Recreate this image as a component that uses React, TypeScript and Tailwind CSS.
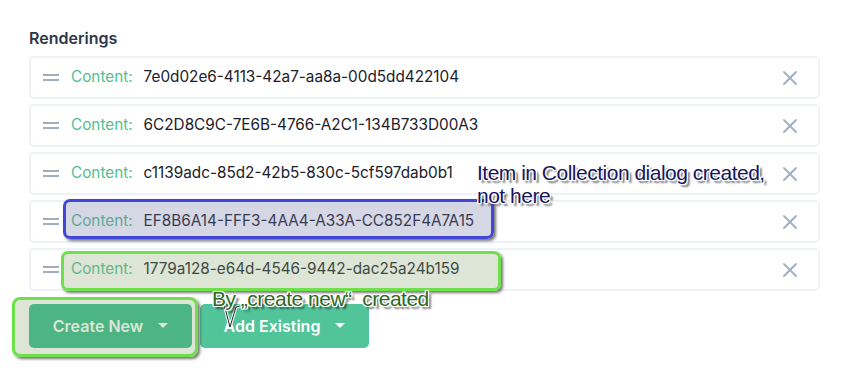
import React from "react";

const rows = [
  "7e0d02e6-4113-42a7-aa8a-00d5dd422104",
  "6C2D8C9C-7E6B-4766-A2C1-134B733D00A3",
  "c1139adc-85d2-42b5-830c-5cf597dab0b1",
  "EF8B6A14-FFF3-4AA4-A33A-CC852F4A7A15",
  "1779a128-e64d-4546-9442-dac25a24b159",
];

const annoShadow =
  "1px 0 0 #fff, -1px 0 0 #fff, 0 1px 0 #fff, 0 -1px 0 #fff, 1px 1px 0 #fff, -1px -1px 0 #fff, 1px -1px 0 #fff, -1px 1px 0 #fff, 3px 3px 2px rgba(0,0,0,0.6)";

function Handle() {
  return (
    <svg width="16" height="8" viewBox="0 0 16 8" className="shrink-0">
      <rect x="0" y="0" width="16" height="2" fill="#a0aec0" />
      <rect x="0" y="5" width="16" height="2" fill="#a0aec0" />
    </svg>
  );
}

function XIcon() {
  return (
    <svg width="16" height="16" viewBox="0 0 16 16" className="shrink-0">
      <path d="M2 2 L14 14 M14 2 L2 14" stroke="#a0aec0" strokeWidth="1.8" strokeLinecap="round" />
    </svg>
  );
}

function Caret() {
  return (
    <svg width="10" height="6" viewBox="0 0 10 6" className="shrink-0">
      <path d="M0 0 L10 0 L5 5 Z" fill="currentColor" />
    </svg>
  );
}

export default function App() {
  return (
    <div
      className="w-[843px] h-[371px] bg-white relative overflow-hidden"
      style={{ fontFamily: "Inter, 'Noto Sans', sans-serif" }}
    >
      <div className="pl-[29px] pr-[23px] pt-[28px]">
        <div className="text-[16px] font-semibold text-[#2d3748] leading-[20px] mb-[8px]">Renderings</div>
        <div className="flex flex-col gap-[5px]">
          {rows.map((r, i) => (
            <div
              key={i}
              className="h-[43px] border-2 border-[#edf2f7] rounded-[5px] flex items-center pl-[12px] pr-[20px]"
            >
              <Handle />
              <span className="ml-[12px] text-[15.3px] text-[#4fc08d]">Content:</span>
              <span className="ml-[11px] text-[15.3px] text-[#1a202c] flex-1">{r}</span>
              <XIcon />
            </div>
          ))}
        </div>
        <div className="flex gap-[8px] mt-[13px]">
          <div className="w-[163px] h-[44px] rounded-[5px] bg-[#32ba89] text-white font-semibold text-[16px] flex items-center justify-center gap-[15px]">
            Create New <Caret />
          </div>
          <div className="w-[169px] h-[44px] rounded-[5px] bg-[#52c49a] text-white font-semibold text-[16px] flex items-center justify-center gap-[15px]">
            Add Existing <Caret />
          </div>
        </div>
      </div>

      {/* annotation: blue highlight */}
      <div className="absolute left-[63px] top-[199px] w-[431px] h-[40px] rounded-[7px] border-[3px] border-[#4046d8] bg-[rgba(120,124,170,0.3)] shadow-[2px_2px_3px_rgba(0,0,0,0.55)]" />
      {/* annotation: green highlight */}
      <div className="absolute left-[61px] top-[251px] w-[440px] h-[40px] rounded-[7px] border-[3px] border-[#6ee04a] bg-[rgba(140,170,120,0.3)] shadow-[2px_2px_3px_rgba(0,0,0,0.55)]" />
      {/* annotation: green around Create New */}
      <div className="absolute left-[12px] top-[297px] w-[186px] h-[60px] rounded-[8px] border-[3px] border-[#6ee04a] bg-[rgba(140,170,120,0.3)] shadow-[2px_2px_3px_rgba(0,0,0,0.55)]" />

      <div
        className="absolute left-[477px] top-[161px] text-[21px] leading-[23px] text-[#17175e] tracking-[-0.5px]"
        style={{ fontFamily: "'Liberation Sans', Arial, sans-serif", textShadow: annoShadow }}
      >
        Item in Collection dialog created,
        <br />
        not here
      </div>

      <svg className="absolute left-[222px] top-[303px]" width="30" height="26" viewBox="0 0 30 26">
        <path d="M2 1 L8 24 L14 4 L26 1" fill="none" stroke="#fff" strokeWidth="3" />
        <path d="M2 1 L8 24 L14 4 L26 1" fill="none" stroke="#222" strokeWidth="1" />
      </svg>

      <div
        className="absolute left-[212px] top-[287px] text-[21px] leading-[23px] text-[#2e6a1c] tracking-[-0.5px]"
        style={{ fontFamily: "'Liberation Sans', Arial, sans-serif", textShadow: annoShadow }}
      >
        By „create new“ &nbsp;created
      </div>
    </div>
  );
}
